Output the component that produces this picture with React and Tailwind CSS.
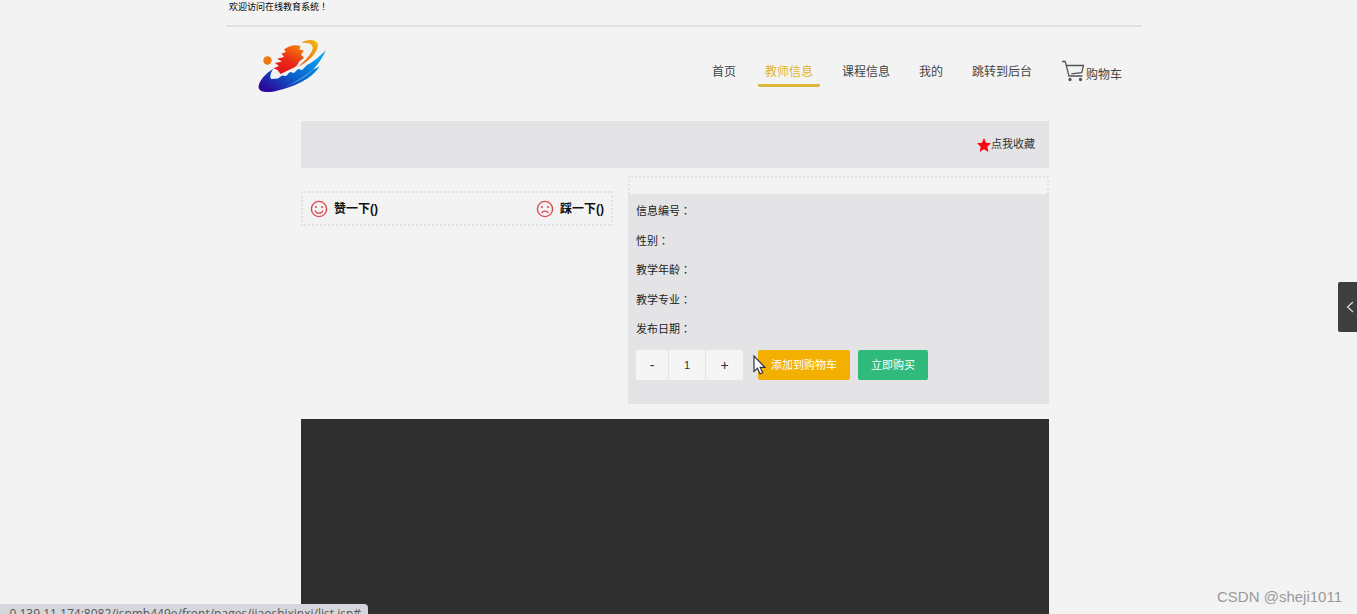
import React, { useState } from 'react';

const navItems = [
  { label: '首页' },
  { label: '教师信息', active: true },
  { label: '课程信息' },
  { label: '我的' },
  { label: '跳转到后台' },
];

const fields = ['信息编号', '性别', '教学年龄', '教学专业', '发布日期'];

function Logo() {
  return (
    <svg viewBox="0 0 70 56" className="h-14 w-[70px]" aria-hidden="true">
      <defs>
        <linearGradient id="wave" x1="0" y1="1" x2="1" y2="0">
          <stop offset="0.1" stopColor="#2a0a9c" />
          <stop offset="0.45" stopColor="#0860cc" />
          <stop offset="0.85" stopColor="#0aa0f0" />
        </linearGradient>
        <linearGradient id="sun" x1="0.2" y1="1" x2="0.7" y2="0">
          <stop offset="0" stopColor="#e6101c" />
          <stop offset="0.5" stopColor="#ea2c16" />
          <stop offset="1" stopColor="#f4780c" />
        </linearGradient>
        <linearGradient id="arc" x1="0" y1="1" x2="1" y2="0">
          <stop offset="0" stopColor="#ee4a10" />
          <stop offset="1" stopColor="#efc00c" />
        </linearGradient>
      </defs>
      <circle cx="10.500" cy="21.500" r="4.2" fill="#ee7a10" />
      <path
        d="M31 8C35 6 40 6 43.500 7L42.500 10.500 47 11.500 44 15.500 47 19 42 22.500C41 26 39 28 35 29.500L31 31.500 23.500 35 20.500 31 16.500 29.300 22 27 18 24 25 22.500 20 19.700 27 18 24.500 14.500 29 13 27 10.500Z"
        fill="url(#sun)"
      />
      <path d="M44.500 3.800C50 0 58 0 60.500 4 62.500 10 56 20 41 28 50 20 57 12 55.500 7.500 54.500 4 50 3.500 44.500 3.800Z" fill="url(#arc)" />
      <path
        d="M16.500 29.500C8 35 2 42 1.500 48 2 54 12 54 21 51.500 36 48 55 40 62.500 27.500L56 30.500C62 24 66 18 69 11 63 17 58 22 50 26L45 31 41 30 37 34 33 33 29 37 25 36.500 21 39.500 14 40C12.500 37 14 33 16.500 29.500Z"
        fill="url(#wave)"
      />
      <path d="M28 48C41 43 51 37 57 30 49 36 40 42 28 48Z" fill="#f3f3f3" opacity="0.35" />
    </svg>
  );
}

function CartIcon() {
  return (
    <svg viewBox="0 0 24 22" className="h-[22px] w-6" fill="none" stroke="#555" strokeWidth="1.3" aria-hidden="true">
      <path d="M1 1.500h3.200L8 16h13.500M5.300 5.500H22.500l-1.800 7.200-10.500 1.100" />
      <circle cx="9" cy="19.500" r="1" fill="#555" />
      <circle cx="19.500" cy="19.500" r="1" fill="#555" />
    </svg>
  );
}

function Face({ sad }) {
  return (
    <svg viewBox="0 0 18 18" className="size-[18px]" fill="none" stroke="#dc4a50" strokeWidth="1.400" aria-hidden="true">
      <circle cx="9" cy="9" r="7.600" />
      <circle cx="6" cy="7" r="1" fill="#dc4a50" stroke="none" />
      <circle cx="12" cy="7" r="1" fill="#dc4a50" stroke="none" />
      <path d={sad ? 'M5.500 13c1.400-2.600 5.600-2.600 7 0' : 'M5 10.500c1.200 3.600 6.800 3.600 8 0'} strokeWidth="1.200" />
    </svg>
  );
}

// full-width punctuation sits in the middle of its box
function Mark({ children }) {
  return <span className="font-['Noto_Sans_CJK_TC',sans-serif]">{children}</span>;
}

function Header() {
  return (
    <header>
      <p className="h-[25px] px-[3px] text-[9px] leading-[14px] text-black">
        欢迎访问在线教育系统<Mark>！</Mark>
      </p>
      <div className="flex items-start justify-between border-t-2 border-[#e2e2e4] pt-3 pr-5 pl-[31px]">
        <Logo />
        <nav className="flex gap-[15px] pt-4 text-xs text-[#444]">
          {navItems.map((item) => (
            <a
              key={item.label}
              href="#"
              className={
                item.active
                  ? 'h-8 rounded-xs border-b-[3px] border-[#dcb637] px-[7px] leading-[34px] text-[#e2b32c]'
                  : 'h-8 px-[7px] leading-[34px]'
              }
            >
              {item.label}
            </a>
          ))}
          <a href="#" className="flex items-center gap-px pl-[7px]">
            <CartIcon />
            <span className="pt-2">购物车</span>
          </a>
        </nav>
      </div>
    </header>
  );
}

function Votes() {
  return (
    <div className="mt-[23px] flex h-[35px] w-[312px] shrink-0 items-center justify-between self-start border-2 border-dotted border-[#e2e2e4] px-[7px] text-xs font-bold text-[#111]">
      <button type="button" className="flex items-center gap-[6px]">
        <Face />
        <span>赞一下()</span>
      </button>
      <button type="button" className="flex items-center gap-[6px]">
        <Face sad />
        <span>踩一下()</span>
      </button>
    </div>
  );
}

function Purchase() {
  const [count, setCount] = useState(1);

  return (
    <div className="mt-[11px] flex h-[30px] text-[11px]">
      <div className="flex gap-px text-[#333]">
        <button
          type="button"
          aria-label="减少"
          className="w-8 rounded-l-xs bg-[#f5f5f5] text-sm"
          onClick={() => setCount(Math.max(1, count - 1))}
        >
          -
        </button>
        <input
          aria-label="数量"
          className="w-9 bg-[#f5f5f5] text-center"
          value={count}
          onChange={(e) => setCount(Number(e.target.value) || 1)}
        />
        <button
          type="button"
          aria-label="增加"
          className="w-[37px] rounded-r-xs bg-[#f5f5f5] text-sm"
          onClick={() => setCount(count + 1)}
        >
          +
        </button>
      </div>
      <button type="button" className="ml-[15px] w-[92px] rounded-xs bg-[#f3b000] text-white">
        添加到购物车
      </button>
      <button type="button" className="ml-2 w-[70px] rounded-xs bg-[#30bb7c] text-white">
        立即购买
      </button>
    </div>
  );
}

export default function App() {
  return (
    <div className="relative h-screen overflow-hidden bg-[#f3f3f3] pl-[11px] font-['Liberation_Sans','Noto_Sans_CJK_SC',sans-serif]">
      <div className="mx-auto flex h-full max-w-[916px] flex-col">
        <Header />

        <main className="mt-[26px] flex flex-1 flex-col pr-[93px] pl-[75px]">
          <div className="flex h-[47px] shrink-0 items-center justify-end bg-[#e4e4e6] pr-[14px]">
            <button type="button" className="flex items-center text-[11px] text-[#333]">
              <svg viewBox="0 0 24 24" className="size-[14px]" fill="#fa0510" aria-hidden="true">
                <path d="M12 0l3.500 8 8.500 1-6.300 5.800L19.500 24 12 19.300 4.500 24l1.800-9.200L0 9l8.500-1z" />
              </svg>
              <span>点我收藏</span>
            </button>
          </div>

          <div className="flex justify-between">
            <Votes />
            <section className="mt-2 w-[421px]">
              <div className="h-[18px] border-2 border-b-0 border-dotted border-[#e2e2e4]" />
              <div className="h-[210px] bg-[#e4e4e6] px-2 pt-[7px]">
                <dl className="flex h-[138px] flex-col justify-between text-[11px] text-[#222]">
                  {fields.map((field) => (
                    <div key={field} className="flex h-5 items-center">
                      <dt>
                        {field}
                        <Mark>：</Mark>
                      </dt>
                      <dd />
                    </div>
                  ))}
                </dl>
                <Purchase />
              </div>
            </section>
          </div>

          <div className="mt-[15px] flex-1 bg-[#2f2f2f]" />
        </main>
      </div>

      <button
        type="button"
        aria-label="展开"
        className="absolute top-[282px] right-0 flex h-[50px] w-[19px] items-center justify-end rounded-l-xs bg-[#3e3e3e] pr-[3px]"
      >
        <svg viewBox="0 0 8 12" className="h-3 w-2" fill="none" stroke="#ddd" strokeWidth="1.200" aria-hidden="true">
          <path d="M7 1L1.500 6 7 11" />
        </svg>
      </button>

      {/* mouse pointer */}
      <svg viewBox="0 0 13 20" className="absolute top-[355px] left-[753px] h-5 w-[13px]" aria-hidden="true">
        <path d="M1 1v15.500l3.500-3.200 2.600 5.700 2.600-1.200-2.500-5.400H12z" fill="#fff" stroke="#334" strokeWidth="1.200" />
      </svg>

      {/* browser status bar */}
      <div className="absolute bottom-0 left-0 flex h-[10px] w-[368px] justify-end overflow-hidden rounded-tr-sm bg-[#d6d7dc] pr-[7px] font-['Open_Sans',sans-serif] text-xs leading-5 whitespace-nowrap text-[#555]">
        0.139.11.174:8082/jspmb449e/front/pages/jiaoshixinxi/list.jsp#
      </div>

      <p className="absolute right-[15px] bottom-[7px] text-[15px] leading-5 text-[#999]">CSDN @sheji1011</p>
    </div>
  );
}
